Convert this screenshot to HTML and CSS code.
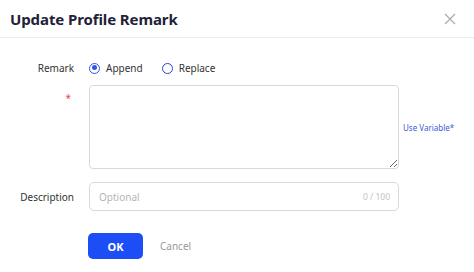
FILE: index.html
```html
<!DOCTYPE html>
<html lang="en">
<head>
    <meta charset="UTF-8">
    <meta name="viewport" content="width=device-width, initial-scale=1.0">
    <title>Update Profile Remark</title>
    <link rel="stylesheet" href="styles.css">
</head>
<body>
    <div class="modal">
        <div class="modal-header">
            <h1>Update Profile Remark</h1>
            <button class="close-btn" aria-label="Close">
                <svg width="12" height="12" viewBox="0 0 12 12">
                    <path d="M1 1L11 11M11 1L1 11" stroke="#a8a8a8" stroke-width="1.1" fill="none"/>
                </svg>
            </button>
        </div>
        <form class="modal-body">
            <div class="form-row row-remark">
                <label class="form-label">Remark</label>
                <div class="radio-group">
                    <label class="radio checked"><span class="radio-dot"></span>Append</label>
                    <label class="radio"><span class="radio-dot"></span>Replace</label>
                </div>
            </div>
            <div class="form-row row-text">
                <label class="form-label required">*</label>
                <textarea class="textarea"></textarea>
                <a class="use-variable" href="#">Use Variable*</a>
            </div>
            <div class="form-row row-desc">
                <label class="form-label">Description</label>
                <div class="input-wrap">
                    <input class="input" type="text" placeholder="Optional">
                    <span class="counter">0 / 100</span>
                </div>
            </div>
            <div class="form-actions">
                <button type="button" class="ok-btn">OK</button>
                <button type="button" class="cancel-btn">Cancel</button>
            </div>
        </form>
    </div>
</body>
</html>
```

FILE: styles.css
```css
* {
    margin: 0;
    padding: 0;
    box-sizing: border-box;
    font-family: 'Noto Sans', 'Open Sans', sans-serif;
}

body {
    background: #fff;
    color: #333;
    width: 474px;
    height: 272px;
    overflow: hidden;
}

.modal-header {
    height: 38px;
    display: flex;
    align-items: center;
    justify-content: space-between;
    padding: 0 18px 0 10px;
    border-bottom: 1px solid #ededed;
}

.modal-header h1 {
    font-size: 15px;
    font-weight: 700;
    color: #1f2239;
    letter-spacing: -0.1px;
}

.close-btn {
    background: none;
    border: none;
    display: flex;
    cursor: pointer;
    margin-top: 1px;
}

.modal-body {
    padding-top: 17px;
}

.form-row {
    display: grid;
    grid-template-columns: 74px 310px auto;
    column-gap: 15px;
    align-items: center;
}

.form-label {
    font-size: 10px;
    text-align: right;
    color: #333;
}

.form-label.required {
    color: #e34d59;
    align-self: start;
    padding: 6px 3px 0 0;
}

.row-remark {
    height: 26px;
}

.radio-group {
    display: flex;
    gap: 19px;
}

.radio {
    display: flex;
    align-items: center;
    gap: 6px;
    font-size: 10px;
    color: #333;
}

.radio-dot {
    width: 11px;
    height: 11px;
    border: 1.5px solid #2b43c9;
    border-radius: 50%;
    position: relative;
}

.radio.checked .radio-dot {
    border-color: #2f54eb;
}

.radio.checked .radio-dot::after {
    content: '';
    position: absolute;
    left: 1.5px;
    top: 1.5px;
    width: 5px;
    height: 5px;
    border-radius: 50%;
    background: #2f54eb;
}

.row-text {
    margin-top: 4px;
}

.textarea {
    height: 84px;
    border: 1px solid #d9d9d9;
    border-radius: 4px;
    resize: vertical;
}

.use-variable {
    font-size: 8px;
    color: #3a5bd9;
    text-decoration: none;
    margin-left: -11px;
}

.row-desc {
    margin-top: 13px;
}

.input-wrap {
    height: 29px;
    border: 1px solid #d9d9d9;
    border-radius: 5px;
    display: flex;
    align-items: center;
    padding: 0 8px 0 9px;
}

.input {
    flex: 1;
    border: none;
    outline: none;
    font-size: 10px;
    color: #333;
    min-width: 0;
}

.input::placeholder {
    color: #b5b5b5;
}

.counter {
    font-size: 8.5px;
    color: #c4c4c4;
}

.form-actions {
    display: flex;
    align-items: center;
    gap: 17px;
    margin-top: 22px;
    padding-left: 88px;
}

.ok-btn {
    width: 55px;
    height: 26px;
    background: #1d4ef5;
    color: #fff;
    border: none;
    border-radius: 5px;
    font-size: 11px;
    font-weight: 700;
}

.cancel-btn {
    background: none;
    border: none;
    font-size: 10px;
    color: #999;
}
```
